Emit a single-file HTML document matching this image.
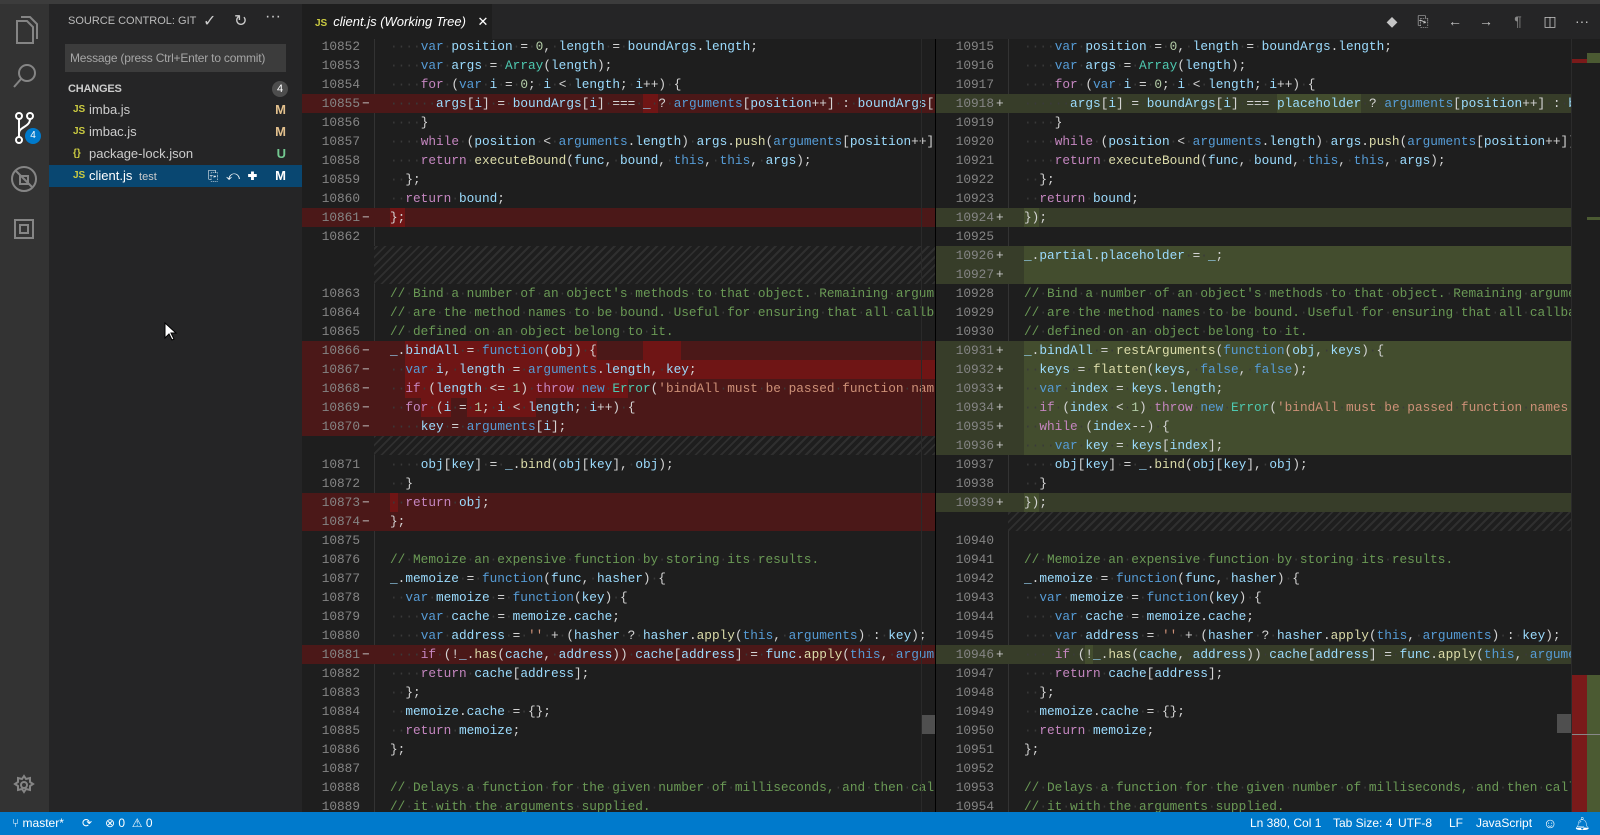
<!DOCTYPE html>
<html><head><meta charset="utf-8">
<style>
*{box-sizing:border-box;margin:0;padding:0}
body{width:1600px;height:835px;overflow:hidden;background:#1e1e1e;font-family:"Liberation Sans",sans-serif;position:relative}
.abs{position:absolute}
#top{left:0;top:0;width:1600px;height:4px;background:#3c3c3c}
#act{left:0;top:4px;width:49px;height:808px;background:#333}
#side{left:49px;top:4px;width:253px;height:808px;background:#252526;color:#ccc;font-size:13px}
#tabs{left:302px;top:4px;width:1298px;height:35px;background:#252526;overflow:hidden}
.tab{left:0;top:0;width:190px;height:35px;background:#1e1e1e;color:#fff;font-size:13px;font-style:italic;line-height:35px;padding-left:13px}
.js{color:#cbcb41;font-weight:bold;font-style:normal;font-size:10px;margin-right:6px}
.ic{position:absolute;top:0;width:24px;text-align:center;line-height:35px;color:#c5c5c5;font-size:14px}
.pane{top:39px;height:773px;overflow:hidden;font:12.77px/19px "Liberation Mono",monospace}
.r{position:absolute;left:0;height:19px;width:100%}
.del{background:#4b1818}
.ins{background:#373d29}
.gap{background:repeating-linear-gradient(-45deg,#1e1e1e 0 4px,#2f2f2f 4px 6px);left:72px !important;}
.n{position:absolute;left:0;width:58px;text-align:right;color:#858585;white-space:pre}
.s{position:absolute;left:60px;color:#c5c5c5}
.c{position:absolute;left:88px;white-space:pre;color:#d4d4d4;top:0}
.h{position:absolute;height:19px;top:0}
.del .h{background:#6f1515}
.ins .h{background:#434d2e}
.guide{position:absolute;top:0;bottom:0;left:72px;width:1px;background:#333}
i{font-style:normal;color:#3a3a3a}
.kb{color:#569cd6}.kp{color:#c586c0}.id{color:#9cdcfe}.fn{color:#dcdcaa}.ty{color:#4ec9b0}.nu{color:#b5cea8}.st{color:#ce9178}.cm{color:#6a9955}
#status{left:0;top:812px;width:1600px;height:23px;background:#007acc;color:#fff;font-size:12px;line-height:23px}
.item{position:absolute;left:0;width:253px;height:22px;line-height:22px}
.item .nm{position:absolute;left:40px}
.item .j{position:absolute;left:24px;color:#cbcb41;font-weight:bold;font-size:10px}
.item .st2{position:absolute;right:16px;font-weight:bold}
</style></head><body>
<div id="top" class="abs"></div>
<div id="act" class="abs">
<svg width="49" height="808" viewBox="0 0 49 808" fill="none" stroke="#858585" stroke-width="2">
<path d="M17 17h10l6 6v16h-16z M21 13h9l7 7v15" />
<circle cx="27" cy="69" r="8"/><path d="M21 75l-7 8"/>
<g stroke="#fff"><circle cx="19" cy="112" r="3"/><circle cx="30" cy="112" r="3"/><circle cx="19" cy="136" r="3"/><path d="M19 115v18 M30 115c0 8-11 8-11 14"/></g>
<circle cx="24" cy="175" r="12"/><path d="M15 166l18 18 M20 172h8v8h-8z"/>
<path d="M15 216h18v18h-18z M20 221h8v8h-8z"/>
<path d="M24 772l2 3 4-1 0 4 3 2-3 2 0 4-4-1-2 3-2-3-4 1 0-4-3-2 3-2 0-4 4 1z"/><circle cx="24" cy="781" r="3"/>
</svg>
<div class="abs" style="left:25px;top:124px;width:16px;height:16px;border-radius:8px;background:#007acc;color:#fff;font-size:10px;text-align:center;line-height:16px">4</div>
</div>
<div id="side" class="abs">
<div class="abs" style="left:19px;top:11px;font-size:11px;color:#bbb">SOURCE CONTROL: GIT</div>
<div class="abs" style="left:154px;top:7px;font-size:16px;color:#ccc">✓</div>
<div class="abs" style="left:185px;top:7px;font-size:16px;color:#ccc">↻</div>
<div class="abs" style="left:216px;top:4px;font-size:16px;color:#ccc">···</div>
<div class="abs" style="left:16px;top:40px;width:221px;height:28px;background:#3c3c3c;color:#a6a6a6;line-height:28px;padding-left:5px;font-size:12px;letter-spacing:-0.2px;white-space:nowrap;overflow:hidden">Message (press Ctrl+Enter to commit)</div>
<div class="abs" style="left:19px;top:79px;font-size:11px;font-weight:bold;color:#ccc;letter-spacing:-0.2px">CHANGES</div>
<div class="abs" style="left:223px;top:77px;width:16px;height:16px;border-radius:8px;background:#4d4d4d;color:#fff;font-size:11px;text-align:center;line-height:16px">4</div>
<div class="item" style="top:95px"><span class="j">JS</span><span class="nm">imba.js</span><span class="st2" style="color:#e2c08d">M</span></div>
<div class="item" style="top:117px"><span class="j">JS</span><span class="nm">imbac.js</span><span class="st2" style="color:#e2c08d">M</span></div>
<div class="item" style="top:139px"><span class="j">{}</span><span class="nm">package-lock.json</span><span class="st2" style="color:#73c991">U</span></div>
<div class="item" style="top:161px;background:#094771;color:#fff"><span class="j">JS</span><span class="nm">client.js <span style="font-size:11px;color:#ccc">&nbsp;test</span></span><span class="abs" style="left:159px;font-size:13px;word-spacing:4px">⎘ ↶ ✚</span><span class="st2">M</span></div>
<svg class="abs" style="left:115px;top:318px" width="14" height="20"><path d="M1 1v15l4-4 3 6 2-1-3-6h5z" fill="#fff" stroke="#000"/></svg>
</div>
<div id="tabs" class="abs">
<div class="tab abs"><span class="js">JS</span>client.js (Working Tree) <span style="font-style:normal;margin-left:8px">✕</span></div>
<span class="ic" style="left:1078px">◆</span>
<span class="ic" style="left:1109px">⎘</span>
<span class="ic" style="left:1141px">←</span>
<span class="ic" style="left:1172px">→</span>
<span class="ic" style="left:1204px;color:#888">¶</span>
<span class="ic" style="left:1236px">◫</span>
<span class="ic" style="left:1268px">···</span>
</div>
<div id="L" class="pane abs" style="left:302px;width:634px">
<div class="guide"></div>
<div class="r"><span class="n">10852</span><div class="c">    var position = 0, length = boundArgs.length;</div></div>
<div class="r"><span class="n">10853</span><div class="c">    var args = Array(length);</div></div>
<div class="r"><span class="n">10854</span><div class="c">    for (var i = 0; i &lt; length; i++) {</div></div>
<div class="r del"><span class="n">10855</span><span class="s">−</span><div class="c">      args[i] = boundArgs[i] === _ ? arguments[position++] : boundArgs[i];</div></div>
<div class="r"><span class="n">10856</span><div class="c">    }</div></div>
<div class="r"><span class="n">10857</span><div class="c">    while (position &lt; arguments.length) args.push(arguments[position++]);</div></div>
<div class="r"><span class="n">10858</span><div class="c">    return executeBound(func, bound, this, this, args);</div></div>
<div class="r"><span class="n">10859</span><div class="c">  };</div></div>
<div class="r"><span class="n">10860</span><div class="c">  return bound;</div></div>
<div class="r del"><span class="n">10861</span><span class="s">−</span><div class="c">};</div></div>
<div class="r"><span class="n">10862</span><div class="c"></div></div>
<div class="r gap g2"></div>
<div class="r skip"></div>
<div class="r"><span class="n">10863</span><div class="c">// Bind a number of an object's methods to that object. Remaining arguments</div></div>
<div class="r"><span class="n">10864</span><div class="c">// are the method names to be bound. Useful for ensuring that all callbacks</div></div>
<div class="r"><span class="n">10865</span><div class="c">// defined on an object belong to it.</div></div>
<div class="r del"><span class="n">10866</span><span class="s">−</span><div class="c">_.bindAll = function(obj) {</div></div>
<div class="r del"><span class="n">10867</span><span class="s">−</span><div class="c">  var i, length = arguments.length, key;</div></div>
<div class="r del"><span class="n">10868</span><span class="s">−</span><div class="c">  if (length &lt;= 1) throw new Error('bindAll must be passed function names');</div></div>
<div class="r del"><span class="n">10869</span><span class="s">−</span><div class="c">  for (i = 1; i &lt; length; i++) {</div></div>
<div class="r del"><span class="n">10870</span><span class="s">−</span><div class="c">    key = arguments[i];</div></div>
<div class="r gap"></div>
<div class="r"><span class="n">10871</span><div class="c">    obj[key] = _.bind(obj[key], obj);</div></div>
<div class="r"><span class="n">10872</span><div class="c">  }</div></div>
<div class="r del"><span class="n">10873</span><span class="s">−</span><div class="c">  return obj;</div></div>
<div class="r del"><span class="n">10874</span><span class="s">−</span><div class="c">};</div></div>
<div class="r"><span class="n">10875</span><div class="c"></div></div>
<div class="r"><span class="n">10876</span><div class="c">// Memoize an expensive function by storing its results.</div></div>
<div class="r"><span class="n">10877</span><div class="c">_.memoize = function(func, hasher) {</div></div>
<div class="r"><span class="n">10878</span><div class="c">  var memoize = function(key) {</div></div>
<div class="r"><span class="n">10879</span><div class="c">    var cache = memoize.cache;</div></div>
<div class="r"><span class="n">10880</span><div class="c">    var address = '' + (hasher ? hasher.apply(this, arguments) : key);</div></div>
<div class="r del"><span class="n">10881</span><span class="s">−</span><div class="c">    if (!_.has(cache, address)) cache[address] = func.apply(this, arguments);</div></div>
<div class="r"><span class="n">10882</span><div class="c">    return cache[address];</div></div>
<div class="r"><span class="n">10883</span><div class="c">  };</div></div>
<div class="r"><span class="n">10884</span><div class="c">  memoize.cache = {};</div></div>
<div class="r"><span class="n">10885</span><div class="c">  return memoize;</div></div>
<div class="r"><span class="n">10886</span><div class="c">};</div></div>
<div class="r"><span class="n">10887</span><div class="c"></div></div>
<div class="r"><span class="n">10888</span><div class="c">// Delays a function for the given number of milliseconds, and then calls</div></div>
<div class="r"><span class="n">10889</span><div class="c">// it with the arguments supplied.</div></div>
<div class="abs" style="left:619px;top:0;width:15px;height:773px;border-left:1px solid #2a2a2a"></div>
<div class="abs" style="left:620px;top:676px;width:14px;height:19px;background:#4f4f4f"></div>
<div class="abs" style="left:633px;top:0;width:1px;height:773px;background:#000"></div>
</div>
<div id="R" class="pane abs" style="left:936px;width:635px">
<div class="guide"></div>
<div class="r"><span class="n">10915</span><div class="c">    var position = 0, length = boundArgs.length;</div></div>
<div class="r"><span class="n">10916</span><div class="c">    var args = Array(length);</div></div>
<div class="r"><span class="n">10917</span><div class="c">    for (var i = 0; i &lt; length; i++) {</div></div>
<div class="r ins"><span class="n">10918</span><span class="s">+</span><div class="c">      args[i] = boundArgs[i] === placeholder ? arguments[position++] : boundArgs[i];</div></div>
<div class="r"><span class="n">10919</span><div class="c">    }</div></div>
<div class="r"><span class="n">10920</span><div class="c">    while (position &lt; arguments.length) args.push(arguments[position++]);</div></div>
<div class="r"><span class="n">10921</span><div class="c">    return executeBound(func, bound, this, this, args);</div></div>
<div class="r"><span class="n">10922</span><div class="c">  };</div></div>
<div class="r"><span class="n">10923</span><div class="c">  return bound;</div></div>
<div class="r ins"><span class="n">10924</span><span class="s">+</span><div class="c">});</div></div>
<div class="r"><span class="n">10925</span><div class="c"></div></div>
<div class="r ins"><span class="n">10926</span><span class="s">+</span><div class="c">_.partial.placeholder = _;</div></div>
<div class="r ins"><span class="n">10927</span><span class="s">+</span><div class="c"></div></div>
<div class="r"><span class="n">10928</span><div class="c">// Bind a number of an object's methods to that object. Remaining arguments</div></div>
<div class="r"><span class="n">10929</span><div class="c">// are the method names to be bound. Useful for ensuring that all callbacks</div></div>
<div class="r"><span class="n">10930</span><div class="c">// defined on an object belong to it.</div></div>
<div class="r ins"><span class="n">10931</span><span class="s">+</span><div class="c">_.bindAll = restArguments(function(obj, keys) {</div></div>
<div class="r ins"><span class="n">10932</span><span class="s">+</span><div class="c">  keys = flatten(keys, false, false);</div></div>
<div class="r ins"><span class="n">10933</span><span class="s">+</span><div class="c">  var index = keys.length;</div></div>
<div class="r ins"><span class="n">10934</span><span class="s">+</span><div class="c">  if (index &lt; 1) throw new Error('bindAll must be passed function names');</div></div>
<div class="r ins"><span class="n">10935</span><span class="s">+</span><div class="c">  while (index--) {</div></div>
<div class="r ins"><span class="n">10936</span><span class="s">+</span><div class="c">    var key = keys[index];</div></div>
<div class="r"><span class="n">10937</span><div class="c">    obj[key] = _.bind(obj[key], obj);</div></div>
<div class="r"><span class="n">10938</span><div class="c">  }</div></div>
<div class="r ins"><span class="n">10939</span><span class="s">+</span><div class="c">});</div></div>
<div class="r gap"></div>
<div class="r"><span class="n">10940</span><div class="c"></div></div>
<div class="r"><span class="n">10941</span><div class="c">// Memoize an expensive function by storing its results.</div></div>
<div class="r"><span class="n">10942</span><div class="c">_.memoize = function(func, hasher) {</div></div>
<div class="r"><span class="n">10943</span><div class="c">  var memoize = function(key) {</div></div>
<div class="r"><span class="n">10944</span><div class="c">    var cache = memoize.cache;</div></div>
<div class="r"><span class="n">10945</span><div class="c">    var address = '' + (hasher ? hasher.apply(this, arguments) : key);</div></div>
<div class="r ins"><span class="n">10946</span><span class="s">+</span><div class="c">    if (!_.has(cache, address)) cache[address] = func.apply(this, arguments);</div></div>
<div class="r"><span class="n">10947</span><div class="c">    return cache[address];</div></div>
<div class="r"><span class="n">10948</span><div class="c">  };</div></div>
<div class="r"><span class="n">10949</span><div class="c">  memoize.cache = {};</div></div>
<div class="r"><span class="n">10950</span><div class="c">  return memoize;</div></div>
<div class="r"><span class="n">10951</span><div class="c">};</div></div>
<div class="r"><span class="n">10952</span><div class="c"></div></div>
<div class="r"><span class="n">10953</span><div class="c">// Delays a function for the given number of milliseconds, and then calls</div></div>
<div class="r"><span class="n">10954</span><div class="c">// it with the arguments supplied.</div></div>
<div class="abs" style="left:621px;top:675px;width:14px;height:19px;background:#4f4f4f"></div>
</div>
<div class="abs" style="left:1571px;top:39px;width:29px;height:773px;background:#1e1e1e;border-left:1px solid #2b2b2b">
<div class="abs" style="left:0;top:20px;width:15px;height:4px;background:#7a1a1a"></div>
<div class="abs" style="left:15px;top:14px;width:14px;height:10px;background:#4b5a32"></div>
<div class="abs" style="left:15px;top:178px;width:14px;height:3px;background:#4b5a32"></div>
<div class="abs" style="left:0;top:636px;width:15px;height:137px;background:#7a1a1a"></div>
<div class="abs" style="left:15px;top:636px;width:14px;height:137px;background:#4b5a32"></div>
<div class="abs" style="left:0;top:695px;width:29px;height:1px;background:#888"></div>
</div>
<div id="status" class="abs">
<span class="abs" style="left:12px">⑂ master*</span>
<span class="abs" style="left:82px">⟳</span>
<span class="abs" style="left:105px">⊗ 0 &nbsp;⚠ 0</span>
<span class="abs" style="left:1250px">Ln 380, Col 1</span>
<span class="abs" style="left:1333px">Tab Size: 4</span>
<span class="abs" style="left:1398px">UTF-8</span>
<span class="abs" style="left:1449px">LF</span>
<span class="abs" style="left:1476px">JavaScript</span>
<span class="abs" style="left:1543px;font-size:14px">☺</span>
<span class="abs" style="left:1574px;font-size:13px">🔔︎</span>
</div>
<script>
var CW=12.77*0.6;
function esc(s){return s.replace(/&/g,'&amp;').replace(/</g,'&lt;').replace(/>/g,'&gt;');}
function dots(s){return s.replace(/ /g,'<i>·</i>');}
var KB=/^(var|function|this|new|false|true|arguments)$/,KP=/^(return|for|while|if|throw)$/;
function hl(s){
 var re=/(\/\/.*$)|('(?:[^'\\]|\\.)*')|(\d+)|([A-Za-z_$][\w$]*)|( +)|([^\sA-Za-z_$\d'\/]+|\/)/g,m,o='';
 while((m=re.exec(s))){
  if(m[1])o+='<span class="cm">'+dots(esc(m[1]))+'</span>';
  else if(m[2])o+='<span class="st">'+dots(esc(m[2]))+'</span>';
  else if(m[3])o+='<span class="nu">'+m[3]+'</span>';
  else if(m[4]){var w=m[4],c='id';
   if(KB.test(w))c='kb';else if(KP.test(w))c='kp';else if(w=='Array'||w=='Error')c='ty';else if(s[re.lastIndex]=='(')c='fn';
   o+='<span class="'+c+'">'+w+'</span>';}
  else if(m[5])o+=dots(m[5]);
  else o+=esc(m[6]);
 }
 return o;
}
function setup(id,H){
 var rows=document.querySelectorAll('#'+id+' > .r');
 rows.forEach(function(r,k){
  r.style.top=(-2+k*19)+'px';
  if(r.classList.contains('g2'))r.style.height='38px';
  if(r.classList.contains('skip'))r.style.display='none';
  var c=r.querySelector('.c');
  if(c)c.innerHTML=hl(c.textContent);
  (H[k]||[]).forEach(function(p){var d=document.createElement('div');d.className='h';d.style.left=(88+p[0]*CW)+'px';d.style.width=Math.min((p[1]-p[0])*CW,640)+'px';r.insertBefore(d,r.firstChild);});
 });
}
setup('L',{3:[[33,35]],9:[[0,2]],15:[[0,27]],16:[[2,27],[33,38]],17:[[2,80]],18:[[2,31]],19:[[4,8],[10,19]],23:[[2,13]],24:[[0,1]],31:[[9,11]]});
setup('R',{3:[[33,44]],9:[[0,2]],11:[[0,100]],12:[[0,100]],16:[[0,100]],17:[[0,100]],18:[[0,100]],19:[[0,100]],20:[[0,100]],21:[[0,100]],24:[[0,2]],32:[[8,9]]});
</script>
</body></html>
